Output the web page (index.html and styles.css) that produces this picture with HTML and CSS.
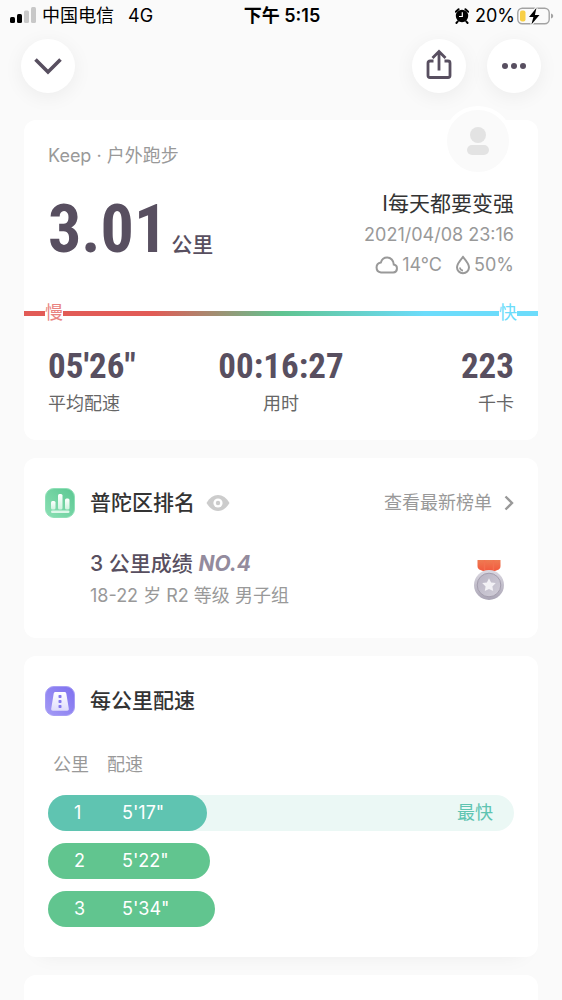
FILE: index.html
```html
<!DOCTYPE html>
<html lang="zh-CN">
<head>
<meta charset="utf-8">
<meta name="viewport" content="width=device-width, initial-scale=1">
<title>户外跑步</title>
<link rel="stylesheet" href="styles.css">
</head>
<body>
<div class="status-bar">
  <div class="status-left">
    <svg class="signal" width="26" height="16" viewBox="0 0 26 16" aria-hidden="true">
      <rect x="0" y="10" width="5" height="6" rx="1.5" fill="#000"/>
      <rect x="7" y="7" width="5" height="9" rx="1.5" fill="#000"/>
      <rect x="14" y="3.500" width="5" height="12.500" rx="1.500" fill="#c8c8c8"/>
      <rect x="21" y="0" width="5" height="16" rx="1.500" fill="#c8c8c8"/>
    </svg>
    <span>中国电信</span>
    <span class="network">4G</span>
  </div>
  <div class="status-time">下午 5:15</div>
  <div class="status-right">
    <svg width="14" height="16" viewBox="0 0 14 16" aria-hidden="true">
      <circle cx="7" cy="8" r="6.200" fill="#000"/>
      <path d="M.8 3.800 3.600 1.200M13.200 3.800 10.400 1.200M2.800 13.400 1.400 15M11.200 13.400l1.400 1.600" stroke="#000" stroke-width="1.900" stroke-linecap="round"/>
      <path d="M7.300 4.300v4.200H4" fill="none" stroke="#fff" stroke-width="1.200"/>
    </svg>
    <span class="percent">20%</span>
    <svg width="37" height="18" viewBox="0 0 37 18" aria-hidden="true">
      <rect x=".8" y="1.200" width="31.400" height="15.600" rx="4.500" fill="none" stroke="#a3a3a3" stroke-width="1.400"/>
      <rect x="3" y="3.500" width="5.500" height="11" rx="2" fill="#f8cf45"/>
      <path d="M34 6.500c1.600.4 2.200 1.400 2.200 2.500s-.6 2.100-2.200 2.500z" fill="#a3a3a3"/>
      <path d="M19.500.8 12 10h4.400l-2 7.500L22.500 8h-4.600z" fill="#000" stroke="#fafafa" stroke-width="2.400" paint-order="stroke"/>
    </svg>
  </div>
</div>

<header class="toolbar">
  <button class="round-button" type="button" aria-label="收起">
    <svg width="28" height="18" viewBox="0 0 28 18" aria-hidden="true"><path d="M1.500 2.500 14 15 26.500 2.500" fill="none" stroke="#584f60" stroke-width="3.600"/></svg>
  </button>
  <div class="toolbar-actions">
    <button class="round-button" type="button" aria-label="分享">
      <svg class="share-icon" width="26" height="30" viewBox="0 0 26 30" aria-hidden="true"><path d="M7.500 12H4a2 2 0 0 0-2 2v12.500a2 2 0 0 0 2 2h18a2 2 0 0 0 2-2V14a2 2 0 0 0-2-2h-3.500M13 21.500V3M6.500 9 13 2.500 19.500 9" fill="none" stroke="#584f60" stroke-width="2.800"/></svg>
    </button>
    <button class="round-button" type="button" aria-label="更多">
      <svg width="24" height="6" viewBox="0 0 24 6" fill="#584f60" aria-hidden="true"><circle cx="3" cy="3" r="3"/><circle cx="12" cy="3" r="3"/><circle cx="21" cy="3" r="3"/></svg>
    </button>
  </div>
</header>

<main class="cards">
  <section class="card summary">
    <div class="avatar">
      <svg width="22" height="28" viewBox="0 0 22 28" fill="#e3e3e3" aria-hidden="true"><circle cx="11" cy="8" r="8"/><rect y="18" width="22" height="10" rx="5"/></svg>
    </div>
    <p class="source">Keep · 户外跑步</p>
    <div class="overview">
      <p class="distance"><span class="distance-value">3.01</span><span class="distance-unit">公里</span></p>
      <div class="profile">
        <p class="user-name">I每天都要变强</p>
        <p class="meta">2021/04/08 23:16</p>
        <p class="meta weather">
          <svg width="24" height="18" viewBox="0 0 24 18" aria-hidden="true"><path d="M6 16.500h12.200a4 4 0 0 0 .6-7.900C18.600 4.500 15.800 1.500 12.200 1.500c-3.100 0-5.500 2-6.300 4.900A5.100 5.100 0 0 0 6 16.500z" fill="none" stroke="#999" stroke-width="2"/></svg>
          <span>14°C</span>
          <svg class="drop" width="16" height="20" viewBox="0 0 16 20" aria-hidden="true"><path d="M8 2C5.500 5 2 8.600 2 12.300a6 6 0 0 0 12 0C14 8.600 10.500 5 8 2z" fill="none" stroke="#999" stroke-width="2"/><path d="M5 12.500a3 3 0 0 0 3 3" fill="none" stroke="#999" stroke-width="1.800"/></svg>
          <span>50%</span>
        </p>
      </div>
    </div>
    <div class="speed-scale"><span class="slow">慢</span><span class="fast">快</span></div>
    <dl class="stats">
      <div class="stat"><dt>平均配速</dt><dd>05'26"</dd></div>
      <div class="stat stat-center"><dt>用时</dt><dd>00:16:27</dd></div>
      <div class="stat stat-end"><dt>千卡</dt><dd>223</dd></div>
    </dl>
  </section>

  <section class="card ranking">
    <div class="card-head">
      <svg class="card-icon" width="30" height="30" viewBox="0 0 30 30" aria-hidden="true">
        <defs>
          <linearGradient id="green" x1="0" y1="1" x2="1" y2="0"><stop offset="0" stop-color="#8be0b4"/><stop offset="1" stop-color="#5bc792"/></linearGradient>
          <linearGradient id="bars" x1="0" y1="0" x2="0" y2="1"><stop offset="0" stop-color="#fff"/><stop offset="1" stop-color="#cff3e0"/></linearGradient>
        </defs>
        <rect x=".5" y=".5" width="29" height="29" rx="8.500" fill="url(#green)" stroke="#8fe0b7"/>
        <g fill="url(#bars)"><rect x="6" y="13" width="4.500" height="8.500" rx="1.500"/><rect x="13" y="6" width="4.500" height="15.500" rx="1.500"/><rect x="20" y="10.500" width="4.500" height="11" rx="1.500"/></g>
        <rect x="6" y="22.500" width="18.500" height="2.500" rx="1.200" fill="#ddf7e9"/>
      </svg>
      <h2>普陀区排名</h2>
      <svg class="eye" width="24" height="16" viewBox="0 0 24 16" aria-hidden="true"><path d="M.5 8C3.500 2.800 7.500 0 12 0S20.500 2.800 23.500 8C20.500 13.200 16.500 16 12 16S3.500 13.200.5 8z" fill="#ccc"/><circle cx="12" cy="8" r="4.600" fill="#fff"/><circle cx="12" cy="8" r="2.200" fill="#ccc"/></svg>
      <a class="more-link" href="#rank">查看最新榜单
        <svg width="10" height="16" viewBox="0 0 10 16" aria-hidden="true"><path d="m1.500 1.500 6.500 6.500-6.500 6.500" fill="none" stroke="#999" stroke-width="2.400"/></svg>
      </a>
    </div>
    <div class="rank-body">
      <div>
        <p class="rank-title">3 公里成绩 <strong>NO.4</strong></p>
        <p class="rank-group">18-22 岁 R2 等级 男子组</p>
      </div>
      <svg class="medal" width="32" height="42" viewBox="0 0 32 42" aria-hidden="true">
        <defs>
          <linearGradient id="ribbon" x1="0" y1="0" x2="0" y2="1"><stop offset="0" stop-color="#ef7b52"/><stop offset="1" stop-color="#f2563c"/></linearGradient>
          <linearGradient id="rim" x1="0" y1="0" x2="0" y2="1"><stop offset="0" stop-color="#dcd9e2"/><stop offset="1" stop-color="#aaa5b5"/></linearGradient>
          <linearGradient id="disc" x1="0" y1="0" x2="1" y2="1"><stop offset="0" stop-color="#b7b2c2"/><stop offset="1" stop-color="#d2cfd9"/></linearGradient>
        </defs>
        <path d="M4.500 1h23v6c0 2-1 3.500-3 4l-5 2h-7l-5-2c-2-.5-3-2-3-4z" fill="url(#ribbon)"/>
        <path d="M11.500 1v10M20.500 1v10" stroke="#f4704f" stroke-width="1.400"/>
        <circle cx="16" cy="26" r="15" fill="url(#rim)"/>
        <circle cx="16" cy="26" r="11.800" fill="url(#disc)" stroke="#a49eae" stroke-width="1"/>
        <path d="m16 19.200 2.100 4.200 4.700.7-3.400 3.300.8 4.700-4.200-2.200-4.200 2.200.8-4.700-3.400-3.300 4.700-.7z" fill="#f2f1f5"/>
      </svg>
    </div>
  </section>

  <section class="card pace">
    <div class="card-head">
      <svg class="card-icon" width="30" height="30" viewBox="0 0 30 30" aria-hidden="true">
        <defs>
          <linearGradient id="violet" x1="0" y1="1" x2="1" y2="0"><stop offset="0" stop-color="#a49bf5"/><stop offset="1" stop-color="#7e70ef"/></linearGradient>
          <linearGradient id="road" x1="0" y1="0" x2="0" y2="1"><stop offset="0" stop-color="#fff"/><stop offset="1" stop-color="#dedbfc"/></linearGradient>
        </defs>
        <rect x=".5" y=".5" width="29" height="29" rx="8.500" fill="url(#violet)" stroke="#a79ef5"/>
        <path d="M10.500 6h9c1 0 1.600.6 1.800 1.500l2.500 15.300c.2 1.200-.5 2-1.600 2H7.800c-1.100 0-1.800-.8-1.600-2L8.700 7.500C8.900 6.600 9.500 6 10.500 6z" fill="url(#road)"/>
        <g fill="#8478ef"><rect x="13.500" y="9" width="3" height="3" rx=".8"/><rect x="13.500" y="14" width="3" height="3" rx=".8"/><rect x="13.500" y="19" width="3" height="3" rx=".8"/></g>
      </svg>
      <h2>每公里配速</h2>
    </div>
    <table class="pace-table">
      <thead><tr><th scope="col">公里</th><th scope="col">配速</th></tr></thead>
      <tbody>
        <tr class="fastest"><td class="bar" style="width:34.2%"><span>1</span><span>5'17"</span></td><td class="badge">最快</td></tr>
        <tr><td class="bar" style="width:34.8%"><span>2</span><span>5'22"</span></td></tr>
        <tr><td class="bar" style="width:35.9%"><span>3</span><span>5'34"</span></td></tr>
      </tbody>
    </table>
  </section>

  <section class="card next-card"></section>
</main>
</body>
</html>
```
FILE: styles.css
```css
* {
  box-sizing: border-box;
}

body {
  margin: 0;
  min-height: 100vh;
  display: flex;
  flex-direction: column;
  background: #fafafa;
  color: #333;
  font-family: Inter, "Noto Sans CJK SC", sans-serif;
  font-size: 18px;
  line-height: 24px;
}

p, h2, dl, dd {
  margin: 0;
}

svg {
  display: block;
  flex: none;
}

/* Status bar */
.status-bar {
  display: grid;
  grid-template-columns: 1fr auto 1fr;
  align-items: center;
  height: 32px;
  padding: 0 8px 0 10px;
  color: #000;
}

.status-left,
.status-right {
  display: flex;
  align-items: center;
}

.status-left {
  gap: 6px;
}

.signal {
  margin-bottom: 2px;
}

.network {
  margin-left: 8px;
}

.status-time {
  font-weight: 600;
}

.status-right {
  justify-content: flex-end;
}

.percent {
  margin: 0 2px 0 6px;
}

/* Toolbar */
.toolbar {
  display: flex;
  justify-content: space-between;
  padding: 7px 21px 27px;
}

.toolbar-actions {
  display: flex;
  gap: 21px;
}

.round-button {
  display: flex;
  align-items: center;
  justify-content: center;
  width: 54px;
  height: 54px;
  padding: 0;
  border: 0;
  border-radius: 50%;
  background: #fff;
  box-shadow: 0 4px 20px rgba(0, 0, 0, 0.06);
}

.share-icon {
  margin-bottom: 4px;
}

/* Cards */
.cards {
  flex: 1;
  display: flex;
  flex-direction: column;
  gap: 18px;
  padding: 0 24px;
}

.card {
  position: relative;
  padding: 24px;
  border-radius: 12px;
  background: #fff;
}

.card-head {
  display: flex;
  align-items: center;
  height: 42px;
}

.card-icon {
  margin: 0 15px 0 -3px;
}

h2 {
  font-size: 21px;
  font-weight: 500;
  line-height: 30px;
}

/* Summary */
.summary {
  padding-bottom: 22px;
}

.avatar {
  position: absolute;
  top: -14px;
  right: 25px;
  display: flex;
  align-items: center;
  justify-content: center;
  width: 70px;
  height: 70px;
  border: 4px solid #fff;
  border-radius: 50%;
  background: #fafafa;
}

.source {
  color: #999;
}

.overview {
  display: flex;
  justify-content: space-between;
  padding-top: 20px;
}

.distance {
  display: flex;
  align-items: baseline;
  gap: 4px;
  color: #584f60;
}

.distance-value {
  font-family: "Roboto Condensed", "Open Sans Condensed", Roboto, sans-serif;
  font-size: 66px;
  font-weight: 700;
  line-height: 84px;
}

.distance-unit {
  font-size: 21px;
  font-weight: 500;
}

.profile {
  text-align: right;
}

.user-name {
  font-size: 21px;
  line-height: 32px;
}

.meta {
  color: #999;
  line-height: 30px;
}

.weather {
  display: flex;
  align-items: center;
  justify-content: flex-end;
  gap: 3px;
}

.drop {
  margin-left: 10px;
}

.speed-scale {
  display: flex;
  justify-content: space-between;
  margin: 21px -24px 19px;
  padding: 0 21px;
  background: linear-gradient(90deg, #e25b56 25%, #5fc490 50%, #6cdcfb 78%) center / 100% 5px no-repeat;
}

.slow,
.fast {
  background: #fff;
}

.slow {
  color: #e98380;
}

.fast {
  color: #6cdcfb;
}

.stats {
  display: grid;
  grid-template-columns: 1fr auto 1fr;
}

.stat {
  display: flex;
  flex-direction: column-reverse;
}

.stat dt {
  color: #666;
  line-height: 28px;
}

.stat dd {
  color: #584f60;
  font-family: "Roboto Condensed", "Open Sans Condensed", Roboto, sans-serif;
  font-size: 35px;
  font-weight: 700;
  line-height: 46px;
}

.stat-center {
  text-align: center;
}

.stat-end {
  text-align: right;
}

/* Ranking */
.ranking {
  padding-bottom: 26px;
}

.eye {
  margin-left: 11px;
}

.more-link {
  display: flex;
  align-items: center;
  gap: 12px;
  margin-left: auto;
  color: #999;
  text-decoration: none;
}

.rank-body {
  display: flex;
  align-items: center;
  justify-content: space-between;
  padding: 24px 9px 0 42px;
}

.rank-title {
  color: #584f60;
  font-size: 21px;
  font-weight: 500;
  line-height: 32px;
}

.rank-title strong {
  color: #938b9d;
  font-style: italic;
  font-weight: 700;
}

.rank-group {
  color: #999;
  line-height: 32px;
}

/* Pace */
.pace {
  padding-bottom: 30px;
  box-shadow: 0 12px 20px -16px rgba(0, 0, 0, 0.08);
}

.pace-table,
.pace-table thead {
  display: block;
}

.pace-table thead tr {
  display: flex;
  gap: 18px;
  padding: 31px 5px 18px;
}

.pace-table th {
  padding: 0;
  color: #999;
  font-weight: 400;
}

.pace-table tbody {
  display: flex;
  flex-direction: column;
  gap: 12px;
}

.pace-table tbody tr {
  display: flex;
  align-items: center;
  justify-content: space-between;
  border-radius: 18px;
}

.bar {
  display: grid;
  grid-template-columns: 48px 1fr;
  align-items: center;
  height: 36px;
  padding: 0 0 0 26px;
  border-radius: 18px;
  background: #61c58f;
  color: #fff;
}

.pace-table tbody .fastest {
  background: #ebf8f5;
}

.fastest .bar {
  background: #5fc4b1;
}

.badge {
  padding: 0 21px;
  color: #5fc4b1;
}

.next-card {
  flex: 1;
  padding: 0;
  border-radius: 12px 12px 0 0;
}
```
